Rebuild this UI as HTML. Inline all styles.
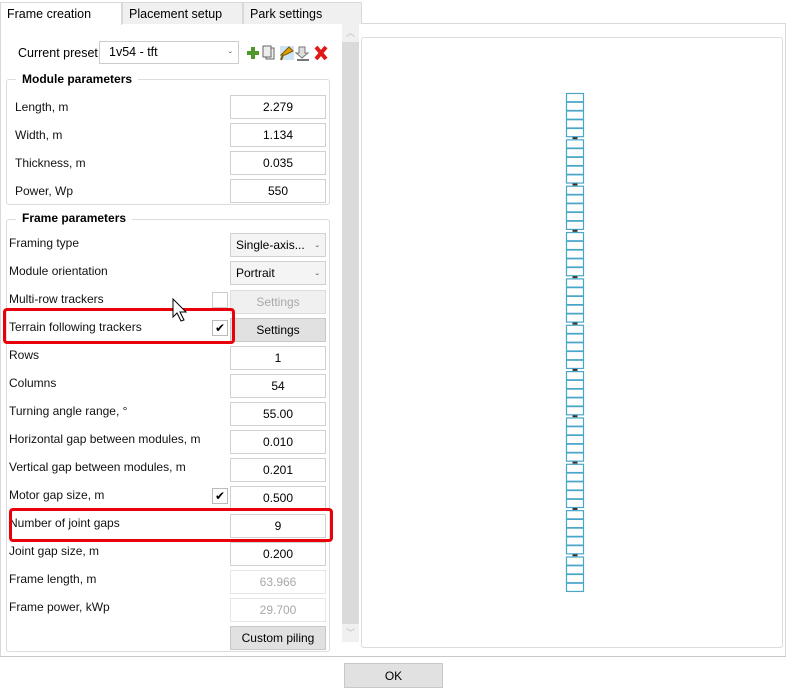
<!DOCTYPE html>
<html><head><meta charset="utf-8"><style>
*{box-sizing:border-box;margin:0;padding:0}
body{width:786px;height:691px;background:#fff;font-family:"Liberation Sans",sans-serif;font-size:12px;color:#000;position:relative;overflow:hidden}
.a{position:absolute}
.tab{position:absolute;top:2px;height:22px;border:1px solid #d9d9d9;border-bottom:none;background:#f0f0f0;padding:4px 0 0 6px;font-size:12.5px}
.lbl{position:absolute;left:9px;font-size:12px;color:#111}
.box{position:absolute;left:230px;width:96px;height:24px;border:1px solid #d0d0d0;background:#fff;text-align:center;line-height:23px;font-size:12px}
.dis{color:#a8a8a8;border-color:#e6e6e6}
.btn{position:absolute;left:230px;width:96px;height:24px;border:1px solid #c8c8c8;background:#e1e1e1;text-align:center;line-height:23px}
.dd{text-align:left;padding-left:5px;background:#f4f4f4}
.dd:after{content:"\2C7";position:absolute;right:6px;top:5px;font-size:10px;color:#555}
.grp{position:absolute;border:1px solid #dcdcdc;border-radius:3px}
.gt{position:absolute;background:#fff;font-weight:bold;padding:0 6px}
.chk{position:absolute;width:16px;height:16px;border:1px solid #bbb;background:#fff;font-size:12px;line-height:15px;text-align:center}
.red{position:absolute;border:3px solid #e8000b;border-radius:4px}
</style></head><body>
<div class="a" style="left:0;top:23px;width:786px;height:1px;background:#d9d9d9"></div>
<div class="tab" style="left:0;width:122px;background:#fff;height:23px">Frame creation</div>
<div class="tab" style="left:122px;width:121px">Placement setup</div>
<div class="tab" style="left:243px;width:119px">Park settings</div>
<div class="a" style="left:0;top:24px;width:1px;height:633px;background:#d9d9d9"></div>
<div class="a" style="left:785px;top:24px;width:1px;height:633px;background:#d9d9d9"></div>

<div class="a" style="left:18px;top:46px;font-size:12.5px">Current preset</div>
<div class="a" style="left:99px;top:41px;width:140px;height:23px;border:1px solid #ccc;line-height:21px;padding-left:9px;background:#fff;font-size:12.5px">1v54 - tft<span style="position:absolute;right:6px;top:4px;font-size:10px;color:#666">ˇ</span></div>
<svg class="a" style="left:245px;top:43px" width="88" height="20">
<path d="M2 10h12M8 4v12" stroke="#4d9a2a" stroke-width="4"/>
<rect x="21" y="5" width="8" height="11" fill="#eee" stroke="#666"/><rect x="18" y="3" width="8" height="11" fill="#eee" stroke="#666"/>
<rect x="35" y="3" width="14" height="14" fill="#cfe3f7"/><path d="M36 12l8-8 4 4-8 4z" fill="#e0a000" stroke="#7a5a00"/><path d="M38 12l-2 5" stroke="#7a5a00" stroke-width="2"/>
<path d="M54 4h6v6h3l-6 5-6-5h3z" fill="#ddd" stroke="#777"/><path d="M52 17h12" stroke="#777" stroke-width="2"/>
<path d="M71 4l10 12M81 4l-10 12" stroke="#e01818" stroke-width="4"/>
</svg>

<div class="grp" style="left:6px;top:79px;width:324px;height:126px"></div>
<div class="gt" style="left:16px;top:72px">Module parameters</div>
<div class="lbl" style="left:15px;top:100px">Length, m</div><div class="box" style="top:95px">2.279</div>
<div class="lbl" style="left:15px;top:128px">Width, m</div><div class="box" style="top:123px">1.134</div>
<div class="lbl" style="left:15px;top:156px">Thickness, m</div><div class="box" style="top:151px">0.035</div>
<div class="lbl" style="left:15px;top:184px">Power, Wp</div><div class="box" style="top:179px">550</div>

<div class="grp" style="left:6px;top:219px;width:324px;height:433px"></div>
<div class="gt" style="left:16px;top:211px">Frame parameters</div>
<div class="lbl" style="top:236px">Framing type</div><div class="box dd" style="top:233px">Single-axis...</div>
<div class="lbl" style="top:264px">Module orientation</div><div class="box dd" style="top:261px">Portrait</div>
<div class="lbl" style="top:292px">Multi-row trackers</div><div class="chk" style="left:212px;top:292px;border-color:#ccc"></div><div class="btn" style="top:290px;background:#f0f0f0;color:#a8a8a8;border-color:#ddd">Settings</div>
<div class="lbl" style="top:320px">Terrain following trackers</div><div class="chk" style="left:212px;top:320px">✔</div><div class="btn" style="top:318px">Settings</div>
<div class="lbl" style="top:348px">Rows</div><div class="box" style="top:346px">1</div>
<div class="lbl" style="top:376px">Columns</div><div class="box" style="top:374px">54</div>
<div class="lbl" style="top:404px">Turning angle range, °</div><div class="box" style="top:402px">55.00</div>
<div class="lbl" style="top:432px">Horizontal gap between modules, m</div><div class="box" style="top:430px">0.010</div>
<div class="lbl" style="top:460px">Vertical gap between modules, m</div><div class="box" style="top:458px">0.201</div>
<div class="lbl" style="top:488px">Motor gap size, m</div><div class="chk" style="left:212px;top:488px">✔</div><div class="box" style="top:486px">0.500</div>
<div class="lbl" style="top:516px">Number of joint gaps</div><div class="box" style="top:514px">9</div>
<div class="lbl" style="top:544px">Joint gap size, m</div><div class="box" style="top:542px">0.200</div>
<div class="lbl" style="top:572px">Frame length, m</div><div class="box dis" style="top:570px">63.966</div>
<div class="lbl" style="top:600px">Frame power, kWp</div><div class="box dis" style="top:598px">29.700</div>
<div class="btn" style="top:626px">Custom piling</div>
<div class="red" style="left:3px;top:308px;width:232px;height:36px"></div>
<div class="red" style="left:9px;top:508px;width:324px;height:34px"></div>
<svg class="a" style="left:172px;top:298px" width="20" height="28"><path d="M1 1v18l4-4 4 8 3-1-4-8h6z" fill="#fff" stroke="#000"/></svg>

<div class="a" style="left:342px;top:24px;width:17px;height:617px;background:#dadada"></div>
<div class="a" style="left:342px;top:24px;width:17px;height:18px;background:#f0f0f0;color:#bbb;font-size:9px;text-align:center;line-height:18px">︿</div>
<div class="a" style="left:342px;top:624px;width:17px;height:18px;background:#f0f0f0;color:#bbb;font-size:9px;text-align:center;line-height:18px">﹀</div>
<div class="a" style="left:361px;top:37px;width:422px;height:611px;border:1px solid #dcdcdc;border-radius:3px"></div>
<svg class="a" id="s" style="left:560px;top:88px" width="30" height="510"></svg>

<div class="a" style="left:0;top:656px;width:786px;height:1px;background:#c8c8c8"></div>
<div class="a" style="left:0;top:657px;width:786px;height:34px;background:#fff"></div>
<div class="btn" style="left:344px;top:663px;width:99px;height:25px;line-height:24px">OK</div>
<script>
var s='',y=5;
for(var g=0;g<11;g++){var n=g<10?5:4;
for(var i=0;i<n;i++){s+='<rect x="6.5" y="'+(y+0.5)+'" width="17" height="8.2" fill="#fff" stroke="#4aa6c9" stroke-width="1.2"/>';y+=8.75;}
if(g<10){s+='<rect x="12.5" y="'+(y+0.4)+'" width="5" height="2" fill="#333"/>';y+=2.6;}}
document.getElementById('s').innerHTML=s;
</script>
</body></html>
